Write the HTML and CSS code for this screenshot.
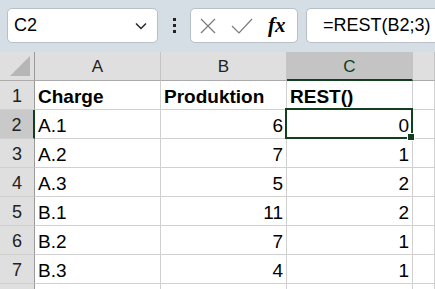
FILE: index.html
```html
<!DOCTYPE html>
<html lang="de">
<head>
    <meta charset="UTF-8">
    <title>Mappe1 - REST</title>
    <link rel="stylesheet" href="styles.css">
</head>
<body>
    <div class="formula-bar">
        <div class="name-box">
            <span>C2</span>
            <svg class="chevron" width="12" height="8" viewBox="0 0 12 8"><path d="M1 1.5 L6 6.5 L11 1.5" fill="none" stroke="#222" stroke-width="1.4"/></svg>
        </div>
        <div class="grip"><i></i><i></i><i></i></div>
        <div class="fx-box">
            <svg width="18" height="18" viewBox="0 0 18 18"><path d="M2 2 L16 16 M16 2 L2 16" stroke="#7a7a7a" stroke-width="1.2" fill="none"/></svg>
            <svg width="22" height="18" viewBox="0 0 22 18"><path d="M1 9 L8 16 L21 2" stroke="#7a7a7a" stroke-width="1.2" fill="none"/></svg>
            <span class="fx">fx</span>
        </div>
        <div class="formula">=REST(B2;3)</div>
    </div>

    <div class="sheet">
        <div class="corner"><span class="tri"></span></div>
        <div class="col-head">A</div>
        <div class="col-head">B</div>
        <div class="col-head active">C</div>
        <div class="col-head"></div>

        <div class="row-head">1</div>
        <div class="cell bold">Charge</div>
        <div class="cell bold">Produktion</div>
        <div class="cell bold">REST()</div>
        <div class="cell"></div>

        <div class="row-head active">2</div>
        <div class="cell">A.1</div>
        <div class="cell num">6</div>
        <div class="cell num selected">0</div>
        <div class="cell"></div>

        <div class="row-head">3</div>
        <div class="cell">A.2</div>
        <div class="cell num">7</div>
        <div class="cell num">1</div>
        <div class="cell"></div>

        <div class="row-head">4</div>
        <div class="cell">A.3</div>
        <div class="cell num">5</div>
        <div class="cell num">2</div>
        <div class="cell"></div>

        <div class="row-head">5</div>
        <div class="cell">B.1</div>
        <div class="cell num">11</div>
        <div class="cell num">2</div>
        <div class="cell"></div>

        <div class="row-head">6</div>
        <div class="cell">B.2</div>
        <div class="cell num">7</div>
        <div class="cell num">1</div>
        <div class="cell"></div>

        <div class="row-head">7</div>
        <div class="cell">B.3</div>
        <div class="cell num">4</div>
        <div class="cell num">1</div>
        <div class="cell"></div>

        <div class="row-head"></div>
        <div class="cell"></div>
        <div class="cell"></div>
        <div class="cell"></div>
        <div class="cell"></div>
    </div>
</body>
</html>
```

FILE: styles.css
```css
* {
    margin: 0;
    padding: 0;
    box-sizing: border-box;
}

html {
    overflow: hidden;
}

body {
    font-family: "Liberation Sans", Arial, sans-serif;
    background: #ffffff;
    color: #000;
    width: 435px;
    height: 289px;
    overflow: hidden;
}

.formula-bar {
    height: 52px;
    background: #d5dde5;
    display: flex;
    align-items: flex-start;
    padding: 8px 0 0 7px;
}

.name-box {
    width: 151px;
    height: 35px;
    background: #fff;
    border: 1px solid #b9bfc6;
    border-radius: 5px;
    display: flex;
    align-items: center;
    justify-content: space-between;
    padding: 0 10px 0 6px;
    font-size: 18px;
}

.grip {
    width: 32px;
    height: 35px;
    display: flex;
    flex-direction: column;
    align-items: center;
    justify-content: center;
    gap: 3px;
}

.grip i {
    width: 3px;
    height: 3px;
    background: #222;
}

.fx-box {
    width: 108px;
    height: 35px;
    background: #fff;
    border: 1px solid #b9bfc6;
    border-radius: 5px;
    display: flex;
    align-items: center;
    padding: 0 6px 0 8px;
    gap: 14px;
}

.fx {
    font-family: "Liberation Serif", "Times New Roman", serif;
    font-style: italic;
    font-weight: bold;
    font-size: 21px;
    margin-left: 1px;
}

.formula {
    flex: 1;
    height: 35px;
    margin-left: 8px;
    background: #fff;
    border: 1px solid #b9bfc6;
    border-right: none;
    border-radius: 5px 0 0 5px;
    font-size: 18px;
    display: flex;
    align-items: center;
    padding-left: 16px;
}

.sheet {
    display: grid;
    grid-template-columns: 35px 126px 126px 126px 1fr;
    grid-auto-rows: 29px;
    height: 237px;
    overflow: hidden;
}

.corner,
.col-head,
.row-head {
    background: #dfdfdf;
    border-right: 1px solid #ababab;
    border-bottom: 1px solid #ababab;
    font-size: 17px;
    color: #222;
    display: flex;
    align-items: center;
    justify-content: center;
}

.corner {
    position: relative;
    border-right-color: #9a9a9a;
}

.corner .tri {
    position: absolute;
    right: 4px;
    bottom: 4px;
    width: 0;
    height: 0;
    border-left: 20px solid transparent;
    border-bottom: 20px solid #b6b6b6;
}

.col-head {
    border-right-color: #c4c4c4;
    padding-top: 2px;
}

.col-head.active {
    background: #c4c4c4;
    color: #0f3d1e;
    border-bottom: 2px solid #133f20;
}

.row-head {
    border-right-color: #9a9a9a;
    border-bottom-color: #cfcfcf;
    font-size: 18px;
    padding-top: 3px;
}

.row-head.active {
    background: #c9c9c9;
    border-right: 2px solid #133f20;
}

.cell {
    border-right: 1px solid #d0d0d0;
    border-bottom: 1px solid #d0d0d0;
    font-size: 19px;
    padding: 5px 3px 0 3px;
    white-space: nowrap;
}

.cell.bold {
    font-weight: bold;
}

.cell.num {
    text-align: right;
}

.cell.selected {
    position: relative;
}

.cell.selected::after {
    content: "";
    position: absolute;
    left: -2px;
    top: -2px;
    right: -1px;
    bottom: -1px;
    border: 2px solid #133f20;
}

.cell.selected::before {
    content: "";
    position: absolute;
    right: -3px;
    bottom: -3px;
    width: 6px;
    height: 6px;
    background: #133f20;
    border: 1px solid #fff;
    z-index: 1;
}
```
